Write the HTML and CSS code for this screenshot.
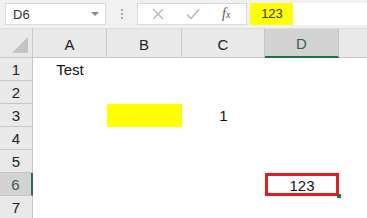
FILE: index.html
```
<!DOCTYPE html>
<head>
    <title>Sheet</title>
    <link rel="stylesheet" href="styles.css">
</head>
<body>
    <div class="toolbar">
        <div class="namebox">
            <span>D6</span>
            <span class="drop"></span>
        </div>
        <div class="dots"><i></i><i></i><i></i></div>
        <div class="fxbox">
            <svg class="ico" width="12" height="12" viewBox="0 0 12 12">
                <path d="M1 1 L11 11 M11 1 L1 11" stroke="#b4b4b4" stroke-width="1.2" fill="none"/>
            </svg>
            <svg class="ico" width="14" height="12" viewBox="0 0 14 12">
                <path d="M1 6.5 L5 10.5 L13 1.5" stroke="#b4b4b4" stroke-width="1.4" fill="none"/>
            </svg>
            <span class="fx">f<sub>x</sub></span>
        </div>
        <div class="formula"><span class="value">123</span></div>
    </div>

    <div class="sheet">
        <div class="corner"><span class="tri"></span></div>
        <div class="colhead">A</div>
        <div class="colhead">B</div>
        <div class="colhead">C</div>
        <div class="colhead active">D</div>
        <div class="colhead last"></div>

        <div class="rowhead">1</div>
        <div class="cell">Test</div><div class="cell"></div><div class="cell"></div><div class="cell"></div><div class="cell"></div>

        <div class="rowhead">2</div>
        <div class="cell"></div><div class="cell"></div><div class="cell"></div><div class="cell"></div><div class="cell"></div>

        <div class="rowhead">3</div>
        <div class="cell"></div><div class="cell yellow"></div><div class="cell">1</div><div class="cell"></div><div class="cell"></div>

        <div class="rowhead">4</div>
        <div class="cell"></div><div class="cell"></div><div class="cell"></div><div class="cell"></div><div class="cell"></div>

        <div class="rowhead">5</div>
        <div class="cell"></div><div class="cell"></div><div class="cell"></div><div class="cell"></div><div class="cell"></div>

        <div class="rowhead active">6</div>
        <div class="cell"></div><div class="cell"></div><div class="cell"></div><div class="cell selected">123<span class="handle"></span></div><div class="cell"></div>

        <div class="rowhead">7</div>
        <div class="cell"></div><div class="cell"></div><div class="cell"></div><div class="cell"></div><div class="cell"></div>
    </div>
</body>
</html>
```

FILE: styles.css
```
body {
    margin: 0;
    width: 367px;
    height: 218px;
    overflow: hidden;
    background-color: #fff;
    font-family: "Liberation Sans", Arial, sans-serif;
}
.toolbar {
    display: flex;
    height: 28px;
    padding-top: 3px;
    box-sizing: border-box;
    background-color: #f1f1f1;
}
.namebox {
    display: flex;
    align-items: center;
    justify-content: space-between;
    width: 101px;
    height: 22px;
    margin-left: 5px;
    padding: 0 6px 0 7px;
    box-sizing: border-box;
    background-color: #fff;
    border: 1px solid #dadada;
    font-size: 13px;
    color: #333;
}
.drop {
    width: 0;
    height: 0;
    border-left: 4px solid transparent;
    border-right: 4px solid transparent;
    border-top: 4px solid #8a8a8a;
}
.dots {
    display: flex;
    flex-direction: column;
    align-items: center;
    justify-content: center;
    gap: 2px;
    width: 31px;
    height: 22px;
}
.dots i {
    width: 2px;
    height: 2px;
    background-color: #a8a8a8;
}
.fxbox {
    display: flex;
    align-items: center;
    width: 110px;
    height: 22px;
    box-sizing: border-box;
    background-color: #fff;
    border: 1px solid #dadada;
}
.ico {
    margin-left: 14px;
}
.ico + .ico {
    margin-left: 22px;
}
.fx {
    margin-left: 22px;
    font-family: "Liberation Serif", serif;
    font-style: italic;
    font-size: 14px;
    color: #555;
}
.fx sub {
    font-size: 10px;
    vertical-align: 0;
}
.formula {
    flex: 1;
    height: 22px;
    margin-left: 3px;
    background-color: #fff;
}
.value {
    display: inline-block;
    width: 42px;
    height: 22px;
    line-height: 22px;
    padding-left: 1px;
    text-align: center;
    background-color: #ffff00;
    font-size: 13px;
    color: #333;
}
.sheet {
    display: grid;
    grid-template-columns: 33px 74px 75px 83px 74px 1fr;
    grid-template-rows: 30px repeat(7, 23px);
}
.corner,
.colhead,
.rowhead {
    background-color: #e9e9e9;
    border-right: 1px solid #c6c6c6;
    border-bottom: 1px solid #c6c6c6;
    box-sizing: border-box;
    color: #222;
    font-size: 15px;
    display: flex;
    align-items: center;
    justify-content: center;
}
.corner {
    position: relative;
    border-top: 1px solid #dcdcdc;
}
.colhead {
    border-top: 1px solid #dcdcdc;
    padding-top: 2px;
}
.colhead.last {
    border-right: none;
}
.tri {
    position: absolute;
    right: 4px;
    bottom: 4px;
    width: 0;
    height: 0;
    border-left: 16px solid transparent;
    border-bottom: 16px solid #c3c3c3;
}
.colhead.active {
    background-color: #d3d3d3;
    border-bottom: 2px solid #217346;
    color: #3b5e48;
}
.rowhead.active {
    background-color: #d3d3d3;
    border-right: 2px solid #217346;
    color: #3b5e48;
}
.cell {
    display: flex;
    align-items: center;
    justify-content: center;
    font-size: 15px;
    color: #111;
}
.yellow {
    background-color: #ffff00;
}
.selected {
    position: relative;
    box-shadow: inset 0 0 0 3px #dd1c24;
    padding-top: 1px;
}
.handle {
    position: absolute;
    right: -2px;
    bottom: -2px;
    width: 4px;
    height: 4px;
    background-color: #217346;
}
```
